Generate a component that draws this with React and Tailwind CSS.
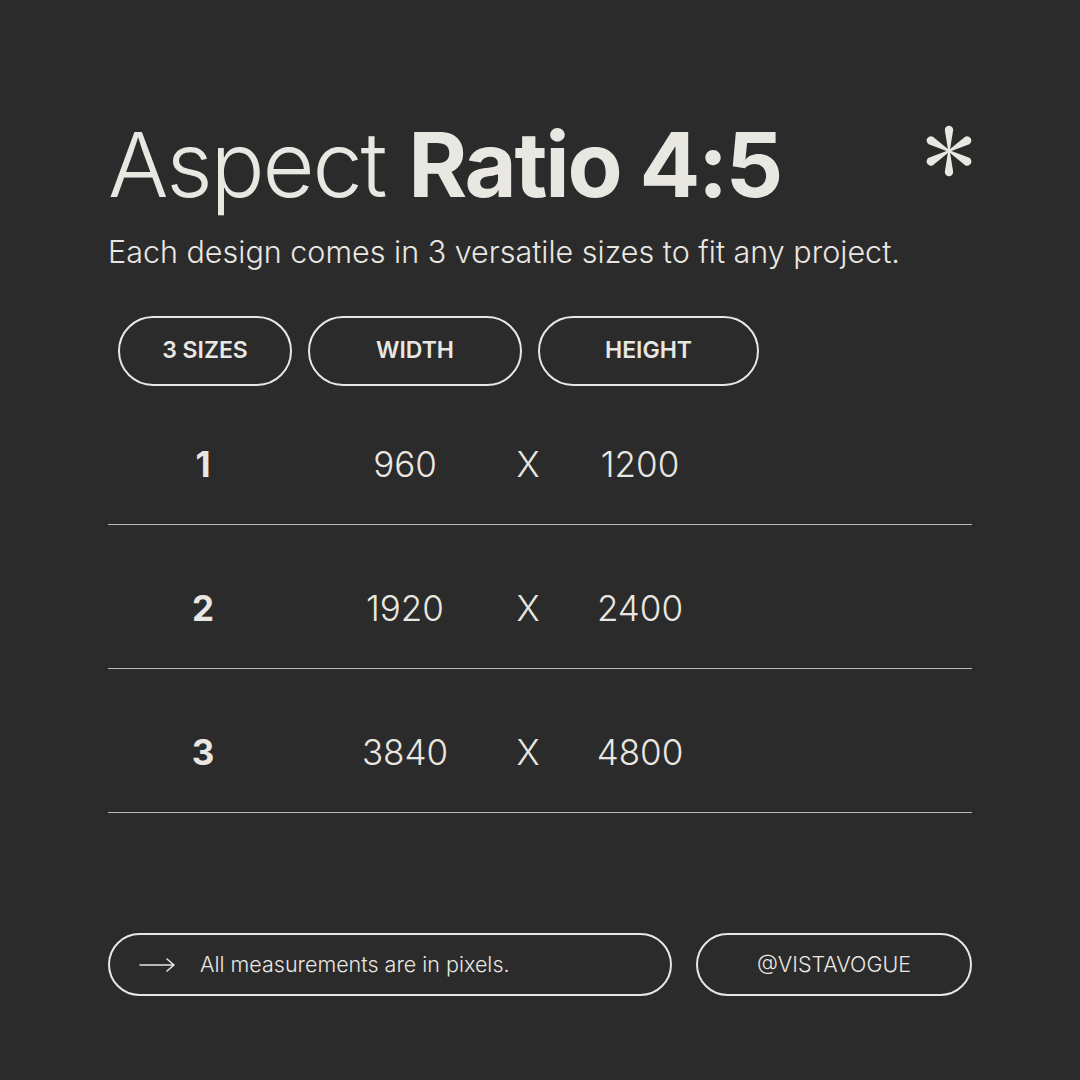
import React from 'react';

const rows = [
    { n: '1', w: '960', h: '1200' },
    { n: '2', w: '1920', h: '2400' },
    { n: '3', w: '3840', h: '4800' },
];

function Asterisk() {
    // six tapered spokes, rounded at the tips
    const spoke = 'M -0.8 0 L -4.2 -21 A 4.2 4.2 0 0 1 4.2 -21 L 0.8 0 Z';
    return (
        <svg width="56" height="56" viewBox="-28 -28 56 56" className="block">
            {[0, 60, 120, 180, 240, 300].map(a => (
                <path key={a} d={spoke} transform={`rotate(${a})`} fill="#e9e7e2" />
            ))}
        </svg>
    );
}

export default function App() {
    return (
        <div className="w-[1080px] h-[1080px] bg-[#2c2b2b] text-[#e9e7e2] px-[108px] pt-[120px] flex flex-col font-['Inter',sans-serif]">
            {/* titre */}
            <div className="flex items-start justify-between">
                <h1 className="text-[90px] leading-none tracking-[-0.025em]">
                    <span className="font-light">Aspect </span>
                    <span className="font-bold">Ratio 4:5</span>
                </h1>
                <div className="mt-[3px] -mr-[5px]">
                    <Asterisk />
                </div>
            </div>
            <p className="mt-[27px] text-[30.5px] font-light leading-none">
                Each design comes in 3 versatile sizes to fit any project.
            </p>

            {/* pills */}
            <div className="mt-[48px] ml-[10px] flex gap-[16px]">
                <div className="w-[174px] h-[70px] rounded-full border-2 border-[#e9e7e2] flex items-center justify-center text-[23px] font-semibold">3 SIZES</div>
                <div className="w-[214px] h-[70px] rounded-full border-2 border-[#e9e7e2] flex items-center justify-center text-[23px] font-semibold">WIDTH</div>
                <div className="w-[221px] h-[70px] rounded-full border-2 border-[#e9e7e2] flex items-center justify-center text-[23px] font-semibold">HEIGHT</div>
            </div>

            {/* table */}
            <div className="-mt-[5px] flex flex-col">
                {rows.map(r => (
                    <div key={r.n} className="h-[144px] border-b border-[#bdbbb6] grid grid-cols-[190px_214px_32px_192px] items-center pt-[24px] text-[35px] leading-none">
                        <div className="text-center font-bold">{r.n}</div>
                        <div className="text-center font-light">{r.w}</div>
                        <div className="text-center font-light">X</div>
                        <div className="text-center font-light">{r.h}</div>
                    </div>
                ))}
            </div>

            {/* bas */}
            <div className="mt-auto mb-[84px] flex gap-[24px]">
                <div className="w-[564px] h-[63px] rounded-full border-2 border-[#e9e7e2] flex items-center pl-[28px] text-[21.5px] font-light">
                    <svg width="40" height="16" viewBox="0 0 40 16" className="mr-[22px]">
                        <path d="M2 8 H36 M29 2 L36 8 L29 14" fill="none" stroke="#e9e7e2" strokeWidth="1.6" strokeLinecap="round" strokeLinejoin="round" />
                    </svg>
                    All measurements are in pixels.
                </div>
                <div className="flex-1 h-[63px] rounded-full border-2 border-[#e9e7e2] flex items-center justify-center text-[21.5px] font-light">
                    @VISTAVOGUE
                </div>
            </div>
        </div>
    );
}
